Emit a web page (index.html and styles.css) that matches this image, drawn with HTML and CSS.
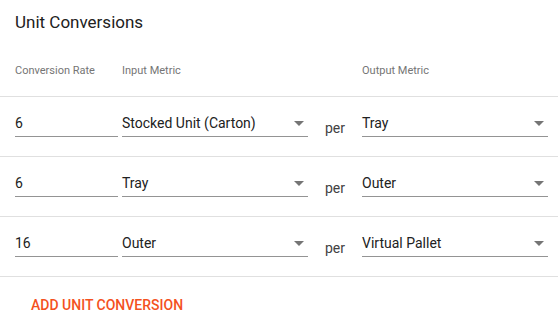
FILE: index.html
```html
<!DOCTYPE html>
<html lang="en">
<head>
    <meta charset="UTF-8">
    <meta name="viewport" content="width=device-width, initial-scale=1.0">
    <title>Unit Conversions</title>
    <link rel="stylesheet" href="styles.css">
</head>
<body>
    <div class="card">
        <h2 class="title">Unit Conversions</h2>

        <!-- Column labels -->
        <div class="grid head">
            <span>Conversion Rate</span>
            <span>Input Metric</span>
            <span></span>
            <span>Output Metric</span>
        </div>

        <!-- Conversion rows -->
        <div class="grid row">
            <div class="field rate">6</div>
            <div class="field select">Stocked Unit (Carton)<span class="arrow"></span></div>
            <div class="per">per</div>
            <div class="field select">Tray<span class="arrow"></span></div>
        </div>
        <div class="grid row">
            <div class="field rate">6</div>
            <div class="field select">Tray<span class="arrow"></span></div>
            <div class="per">per</div>
            <div class="field select">Outer<span class="arrow"></span></div>
        </div>
        <div class="grid row last">
            <div class="field rate">16</div>
            <div class="field select">Outer<span class="arrow"></span></div>
            <div class="per">per</div>
            <div class="field select">Virtual Pallet<span class="arrow"></span></div>
        </div>

        <button class="add">Add Unit Conversion</button>
    </div>
</body>
</html>
```

FILE: styles.css
```css
body {
    margin: 0;
    background-color: white;
    font-family: Roboto, "Liberation Sans", sans-serif;
    color: #212121;
}

.card {
    width: 558px;
}

.title {
    margin: 0;
    padding: 10px 15px 0;
    font-size: 17px;
    font-weight: 400;
    line-height: 24px;
}

.grid {
    display: grid;
    grid-template-columns: 107px 186px 54px 186px;
    padding-left: 15px;
}

.head {
    margin-top: 29px;
    padding-bottom: 17px;
    font-size: 11px;
    line-height: 16px;
    color: #757575;
}

.row {
    border-top: 1px solid #e0e0e0;
    height: 59px;
}

.row.last {
    border-bottom: 1px solid #e0e0e0;
}

.field {
    display: flex;
    align-items: center;
    margin-top: 16px;
    height: 20px;
    padding-bottom: 3px;
    border-bottom: 1px solid #949494;
    font-size: 14px;
    line-height: 20px;
}

.rate {
    width: 103px;
}

.select {
    justify-content: space-between;
}

.arrow {
    width: 0;
    height: 0;
    margin-right: 4px;
    border-left: 5px solid transparent;
    border-right: 5px solid transparent;
    border-top: 5px solid #757575;
}

.per {
    margin-top: 21px;
    font-size: 14px;
    line-height: 20px;
    text-align: center;
    color: #424242;
}

.add {
    margin: 10px 0 0 15px;
    padding: 6px 16px;
    border: none;
    background: none;
    font-family: inherit;
    font-size: 14px;
    font-weight: 500;
    line-height: 24px;
    text-transform: uppercase;
    color: #f4511e;
    cursor: pointer;
}
```
